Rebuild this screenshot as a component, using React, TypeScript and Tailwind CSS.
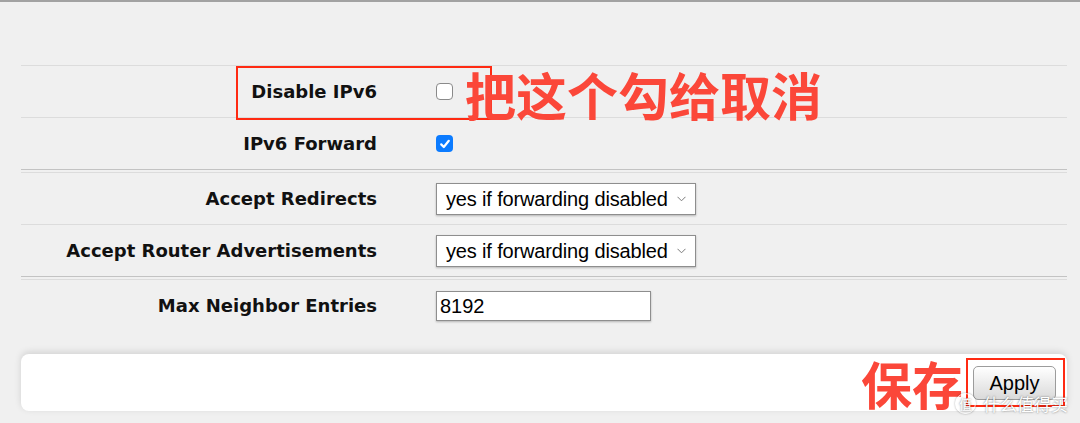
import React from "react";

type Row = {label: string; kind: "check" | "checked" | "select" | "input"; value?: string};

const groups: Row[][] = [
  [
    {label: "Disable IPv6", kind: "check"},
    {label: "IPv6 Forward", kind: "checked"},
  ],
  [
    {label: "Accept Redirects", kind: "select", value: "yes if forwarding disabled"},
    {label: "Accept Router Advertisements", kind: "select", value: "yes if forwarding disabled"},
  ],
  [
    {label: "Max Neighbor Entries", kind: "input", value: "8192"},
  ],
];

const Control = ({row}: { row: Row }) => {
  if (row.kind === "check") {
    return <span className="block w-[17px] h-[17px] rounded-[4px] border-[1.5px] border-[#8a8a8a] bg-white"/>;
  }
  if (row.kind === "checked") {
    return (
      <span className="flex items-center justify-center w-[17px] h-[17px] rounded-[4px] bg-[#0b7bff]">
        <svg width="12" height="12" viewBox="0 0 12 12">
          <path d="M2.2 6.4 L4.8 9 L9.8 2.8" fill="none" stroke="white" strokeWidth="2.2" strokeLinecap="round" strokeLinejoin="round"/>
        </svg>
      </span>
    );
  }
  if (row.kind === "select") {
    return (
      <div className="flex items-center justify-between w-[260px] h-[32px] pl-[9px] pr-[9px] bg-white border border-[#8e8e8e] shadow-[0_1px_2px_rgba(0,0,0,0.25)] font-['Liberation_Sans',Arial,sans-serif] text-[20px] tracking-[-0.15px] text-black">
        <span>{row.value}</span>
        <svg width="9" height="6" viewBox="0 0 9 6" className="mt-[1px]">
          <path d="M0.5 0.8 L4.5 4.8 L8.5 0.8" fill="none" stroke="#7a7a7a" strokeWidth="1"/>
        </svg>
      </div>
    );
  }
  return (
    <div className="flex items-center w-[215px] h-[30px] pl-[3px] bg-white border border-[#8e8e8e] shadow-[0_1px_2px_rgba(0,0,0,0.25)] font-['Liberation_Sans',Arial,sans-serif] text-[20px] text-black">
      {row.value}
    </div>
  );
};

const App = () => {
  return (
    <div className="relative w-[1080px] h-[423px] overflow-hidden bg-[#f0f0f0] border-t-2 border-[#a2a2a2]">
      <div className="pt-[63px] pl-[21px] pr-[13px]">
        {groups.map((group, gi) =>
          <div key={gi} className={gi < groups.length - 1 ? "border-b border-[#c3c3c3] mb-[2px]" : ""}>
            {group.map(row =>
              <div key={row.label} className="grid grid-cols-[356px_1fr] gap-x-[59px] items-center h-[52px] border-t border-[#dcdcdc]">
                <div className="text-right font-['DejaVu_Sans',Verdana,sans-serif] font-bold text-[18px] text-[#111]">
                  {row.label}
                </div>
                <div>
                  <Control row={row}/>
                </div>
              </div>
            )}
          </div>
        )}

        <div className="mt-[23px] h-[57px] rounded-[8px] bg-white shadow-[0_-2px_7px_rgba(0,0,0,0.13)] flex items-center justify-end pr-[2px]">
          <span className="mt-[1px] mr-[3px] font-['Noto_Sans_CJK_SC',sans-serif] font-bold text-[51px] leading-none text-[#fb4739]">
            保存
          </span>
          <div className="flex items-center w-[99px] h-[49px] pl-[5px] border-2 border-[#ff2a12]">
            <button className="w-[83px] h-[34px] rounded-[5px] border border-[#9c9c9c] bg-gradient-to-b from-white to-[#dadada] font-['Liberation_Sans',Arial,sans-serif] text-[20px] text-black">
              Apply
            </button>
          </div>
        </div>
      </div>

      {/* annotation over the first row */}
      <div className="absolute left-[236px] top-[64px] w-[256px] h-[54px] border-2 border-[#ff2a12]"/>
      <div className="absolute left-[465px] top-[67px] font-['Noto_Sans_CJK_SC',sans-serif] font-bold text-[51px] leading-none text-[#fb4739] whitespace-nowrap">
        把这个勾给取消
      </div>

      {/* watermark */}
      <div className="absolute left-[955px] top-[391px] flex items-center gap-[7px] text-white font-['Noto_Sans_CJK_SC',sans-serif] [text-shadow:0_0_2px_rgba(0,0,0,0.55)]">
        <span className="flex items-center justify-center w-[21px] h-[21px] rounded-full border border-white/80 shadow-[0_0_2px_rgba(0,0,0,0.4)] text-[13px] leading-none">值</span>
        <span className="text-[17px] leading-none">什么值得买</span>
      </div>
    </div>
  );
};

export default App;
